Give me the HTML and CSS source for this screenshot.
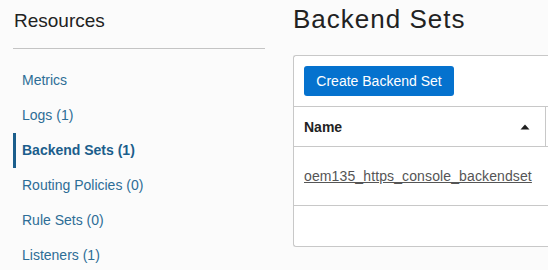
FILE: index.html
```html
<!DOCTYPE html>
<html lang="en">
<head>
<meta charset="utf-8">
<title>Backend Sets</title>
<link rel="stylesheet" href="styles.css">
</head>
<body>
<div class="page">
  <aside class="sidebar">
    <h2 class="side-title">Resources</h2>
    <ul class="side-nav">
      <li class="side-item"><a href="#" class="side-link">Metrics</a></li>
      <li class="side-item"><a href="#" class="side-link">Logs (1)</a></li>
      <li class="side-item is-active"><a href="#" class="side-link">Backend Sets (1)</a></li>
      <li class="side-item"><a href="#" class="side-link">Routing Policies (0)</a></li>
      <li class="side-item"><a href="#" class="side-link">Rule Sets (0)</a></li>
      <li class="side-item"><a href="#" class="side-link">Listeners (1)</a></li>
    </ul>
  </aside>
  <main class="main">
    <h1 class="page-title">Backend Sets</h1>
    <div class="card">
      <div class="toolbar">
        <button class="btn-primary" type="button">Create Backend Set</button>
      </div>
      <table class="data-table">
        <thead>
          <tr>
            <th class="col-name">
              <div class="th-inner">
                <span>Name</span>
                <svg class="sort-icon" width="10" height="6" viewBox="0 0 10 6"><path d="M5 0.5 L9.5 5.5 L0.5 5.5 Z" fill="#1f1f1f"/></svg>
              </div>
            </th>
            <th class="col-rest"></th>
          </tr>
        </thead>
        <tbody>
          <tr>
            <td class="cell-name"><a href="#" class="row-link">oem135_https_console_backendset</a></td>
            <td></td>
          </tr>
        </tbody>
      </table>
      <div class="card-foot"></div>
    </div>
  </main>
</div>
</body>
</html>
```

FILE: styles.css
```css
html, body {
  margin: 0;
  padding: 0;
}
body {
  background: #fbfbfb;
  font-family: "Liberation Sans", Arial, sans-serif;
  color: #222;
  overflow: hidden;
  width: 548px;
  height: 270px;
}
.page {
  display: flex;
  align-items: flex-start;
  padding-left: 13px;
}
.sidebar {
  width: 252px;
  flex: none;
}
.side-title {
  margin: 10px 0 0 0;
  padding: 0 0 16px 1px;
  font-size: 19px;
  line-height: 22px;
  font-weight: normal;
  color: #222;
  border-bottom: 1px solid #c4c4c4;
}
.side-nav {
  list-style: none;
  margin: 14px 0 0 0;
  padding: 0;
}
.side-item {
  height: 35px;
  line-height: 35px;
  font-size: 14px;
  padding-left: 9px;
}
.side-link {
  color: #2d6d96;
  text-decoration: none;
}
.side-item.is-active {
  border-left: 3px solid #1b5e8c;
  padding-left: 6px;
}
.side-item.is-active .side-link {
  color: #1b5e8c;
  font-weight: bold;
}
.main {
  margin-left: 28px;
  padding-top: 4px;
  flex: 1;
  min-width: 0;
}
.page-title {
  margin: 0;
  font-size: 26px;
  line-height: 30px;
  font-weight: normal;
  letter-spacing: 1px;
  color: #222;
}
.card {
  margin-top: 21px;
  background: #fff;
  border: 1px solid #c8c8c8;
  border-right: 0;
  border-radius: 3px 0 0 3px;
}
.toolbar {
  padding: 10px 10px;
}
.btn-primary {
  display: block;
  width: 150px;
  height: 30px;
  border: 0;
  border-radius: 3px;
  background: #0572ce;
  color: #fff;
  font-family: "Liberation Sans", Arial, sans-serif;
  font-size: 14px;
  padding: 0;
  cursor: pointer;
}
.data-table {
  width: 100%;
  border-collapse: collapse;
}
.data-table th {
  height: 39px;
  padding: 0;
  border-top: 1px solid #c8c8c8;
  border-bottom: 1px solid #c8c8c8;
  text-align: left;
  font-size: 14px;
  font-weight: bold;
  color: #222;
}
.col-name {
  width: 251px;
  border-right: 1px solid #c8c8c8;
}
.th-inner {
  display: flex;
  align-items: center;
  justify-content: space-between;
  padding: 0 15px 0 10px;
}
.sort-icon {
  display: block;
}
.data-table td {
  height: 58px;
  padding: 0;
  border-bottom: 1px solid #c8c8c8;
  font-size: 14px;
}
.cell-name {
  padding-left: 10px !important;
  white-space: nowrap;
}
.row-link {
  color: #555;
  text-decoration: underline;
  letter-spacing: 0.12px;
}
.card-foot {
  height: 40px;
}
```
